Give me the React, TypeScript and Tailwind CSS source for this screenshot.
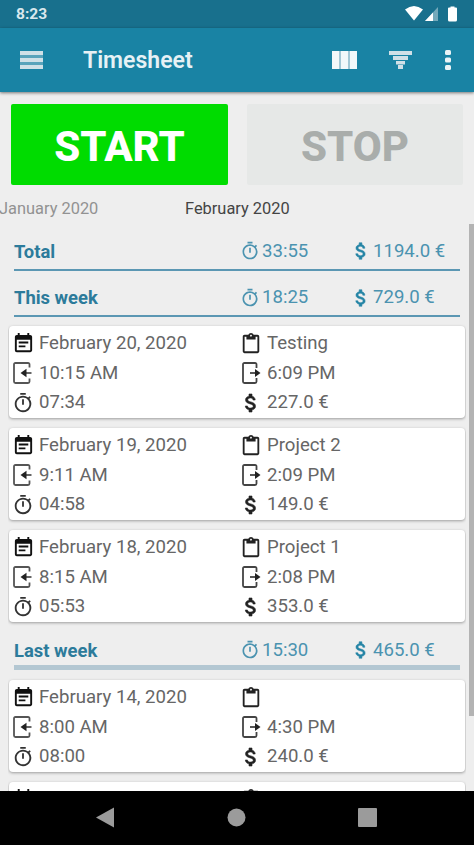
import React from 'react'
import { MdContentPaste, MdEventNote, MdOutlineTimer } from 'react-icons/md'

interface Entry {
  date: string
  project: string
  start: string
  end: string
  duration: string
  amount: string
}

interface SummaryProps {
  label: string
  time: string
  amount: string
  className?: string
}

const thisWeek: Entry[] = [
  { date: 'February 20, 2020', project: 'Testing', start: '10:15 AM', end: '6:09 PM', duration: '07:34', amount: '227.0 €' },
  { date: 'February 19, 2020', project: 'Project 2', start: '9:11 AM', end: '2:09 PM', duration: '04:58', amount: '149.0 €' },
  { date: 'February 18, 2020', project: 'Project 1', start: '8:15 AM', end: '2:08 PM', duration: '05:53', amount: '353.0 €' },
]

const lastWeek: Entry[] = [
  { date: 'February 14, 2020', project: '', start: '8:00 AM', end: '4:30 PM', duration: '08:00', amount: '240.0 €' },
  { date: '', project: '', start: '', end: '', duration: '', amount: '' },
]

function ClockInIcon() {
  return (
    <svg viewBox="0 0 20 22" className="ml-px h-[22px] w-5 shrink-0" fill="none" stroke="#555" strokeWidth="1.8">
      <path d="M16.500 5.500V2.500q0-1.500-1.500-1.500H2.500Q1 1 1 2.500v17q0 1.500 1.500 1.500h12.500q1.500 0 1.500-1.500v-3" />
      <path d="M18.500 11h-6" />
      <path d="M7.500 11l6-4.200v8.400z" fill="#222" stroke="none" />
    </svg>
  )
}

function ClockOutIcon() {
  return (
    <svg viewBox="0 0 20 22" className="ml-[2px] h-[22px] w-5 shrink-0" fill="none" stroke="#444" strokeWidth="1.8">
      <path d="M14.500 6V2.500q0-1.500-1.500-1.500H2.500Q1 1 1 2.500v17q0 1.500 1.500 1.500H13q1.500 0 1.500-1.500V16" />
      <path d="M8 11h6" />
      <path d="M18.500 11l-5.500-4v8z" fill="#222" stroke="none" />
    </svg>
  )
}

function DollarIcon({ className = '' }: { className?: string }) {
  return (
    <svg viewBox="0 0 24 24" className={`shrink-0 ${className}`} fill="currentColor" stroke="currentColor" strokeWidth="0.6">
      <path d="M11.8 10.900c-2.270-.590-3-1.200-3-2.150 0-1.090 1.010-1.850 2.700-1.850 1.780 0 2.440.850 2.500 2.100h2.210c-.070-1.720-1.120-3.300-3.210-3.810V3h-3v2.160c-1.940.420-3.500 1.680-3.500 3.610 0 2.310 1.910 3.460 4.700 4.130 2.500.600 3 1.480 3 2.410 0 .690-.490 1.790-2.700 1.790-2.060 0-2.870-.920-2.980-2.100h-2.200c.120 2.190 1.760 3.420 3.680 3.830V21h3v-2.150c1.950-.370 3.500-1.500 3.500-3.550 0-2.840-2.430-3.810-4.700-4.400z" />
    </svg>
  )
}

function Cell({ icon, text }: { icon: React.ReactNode; text: string }) {
  return (
    <div className="flex h-[29.5px] items-center">
      <span className="flex w-[27px] shrink-0 items-center">{icon}</span>
      <span className="pt-px whitespace-nowrap">{text}</span>
    </div>
  )
}

function EntryCard({ entry }: { entry: Entry }) {
  return (
    <div className="mb-[10px] flex h-[92px] shrink-0 rounded-[4px] bg-white pt-[3px] pl-[3px] text-[18.6px] text-[#666] shadow-[0_1px_3px_rgba(0,0,0,0.35)]">
      <div className="w-[228px]">
        <Cell icon={<MdEventNote className="size-[23px] text-[#111]" />} text={entry.date} />
        <Cell icon={<ClockInIcon />} text={entry.start} />
        <Cell icon={<MdOutlineTimer className="size-[22px] text-[#333]" />} text={entry.duration} />
      </div>
      <div>
        <Cell icon={<MdContentPaste className="size-[22px] text-[#222]" />} text={entry.project} />
        <Cell icon={<ClockOutIcon />} text={entry.end} />
        <Cell icon={<DollarIcon className="-ml-px size-[24px] text-[#222]" />} text={entry.amount} />
      </div>
    </div>
  )
}

function Summary({ label, time, amount, className = '' }: SummaryProps) {
  return (
    <div className={`mr-[5px] ml-[5px] flex shrink-0 items-center border-[#5b97b3] text-[18.6px] text-[#4b93b0] ${className}`}>
      <span className="w-[226px] text-[18.4px] font-bold text-[#2c7b9b]">{label}</span>
      <span className="flex w-[110px] items-center gap-[2px]">
        <MdOutlineTimer className="size-[20px]" />
        {time}
      </span>
      <span className="flex items-center gap-px whitespace-nowrap">
        <DollarIcon className="size-[22px] text-[#2484a5]" />
        {amount}
      </span>
    </div>
  )
}

function StatusBar() {
  return (
    <div className="flex h-[28px] shrink-0 items-center justify-between bg-[#18708d] pr-[16px] pl-[16px] text-white">
      <span className="pt-px text-[15.500px] font-bold text-[#d9e8ed]">8:23</span>
      <svg width="54" height="18" viewBox="0 0 54 18" fill="currentColor">
        <path d="M1 4.500Q10 -2.500 19 4.500L10 15.500z" />
        <path d="M21 16L34 2v14z" opacity="0.4" />
        <path d="M21 16l8-8.600V16z" />
        <path d="M44 3.500q0-1 1-1h1.500V1.500h4v1H52q1 0 1 1V15q0 1.500-1.500 1.500h-6Q44 16.500 44 15z" />
      </svg>
    </div>
  )
}

function Toolbar() {
  return (
    <header className="relative z-10 flex h-[64px] shrink-0 items-center bg-[#1983a4] text-[#d0e0e7] shadow-[0_1px_3px_rgba(0,0,0,0.5)]">
      <svg width="23" height="18" viewBox="0 0 23 18" className="ml-[20px]" fill="currentColor">
        <path d="M0 0h23v18H0z" opacity="0.35" />
        <path d="M0 0h23v4H0zM0 7h23v4H0zM0 14h23v4H0z" />
      </svg>
      <h1 className="ml-[40px] pt-[3px] text-[23px] font-semibold text-[#e6f1f5]">Timesheet</h1>
      <div className="ml-auto flex items-center">
        <svg width="25" height="18" viewBox="0 0 25 18">
          <path d="M0 0h25v18H0z" fill="#a3c7d5" />
          <path d="M0 0h7v18H0zM9 0h7v18H9zM18 0h7v18h-7z" fill="#f2f8fa" />
        </svg>
        <svg width="23" height="18" viewBox="0 0 23 18" className="ml-[32px]" fill="currentColor">
          <path d="M0 0h23v4H0zM4 5h15v4H4zM7 10h9v3.500H7zM9 14h5v4H9z" />
        </svg>
        <svg width="6" height="20" viewBox="0 0 6 20" className="mr-[23px] ml-[33px]" fill="#eaf3f6">
          <rect width="6" height="5" rx="1.500" />
          <rect y="7.500" width="6" height="5" rx="1.500" />
          <rect y="15" width="6" height="5" rx="1.500" />
        </svg>
      </div>
    </header>
  )
}

function NavBar() {
  return (
    <nav className="flex h-[54px] shrink-0 items-center bg-black">
      <svg width="474" height="54" viewBox="0 0 474 54" fill="#9b9b9b">
        <path d="M96 26.500L114 16.500v20z" />
        <circle cx="236.500" cy="26.500" r="9" />
        <rect x="358" y="17" width="19" height="19" rx="1" />
      </svg>
    </nav>
  )
}

export default function App() {
  return (
    <div className="flex h-[845px] w-[474px] flex-col overflow-hidden bg-[#eeeeee] font-['Roboto',sans-serif]">
      <StatusBar />
      <Toolbar />

      <div className="flex gap-[19px] px-[11px] pt-[12px] text-[42px] font-extrabold">
        <button type="button" className="h-[81px] w-[217px] rounded-[2px] bg-[#00dc00] pt-[4px] text-white">
          START
        </button>
        <button type="button" className="h-[81px] w-[216px] rounded-[2px] bg-[#e6e8e7] pt-[4px] text-[#a9adab]">
          STOP
        </button>
      </div>

      <div className="flex h-[40px] shrink-0 items-center pt-[9px] text-[16.4px]">
        <span className="-ml-px w-[186px] text-[#929292]">January 2020</span>
        <span className="text-[#444]">February 2020</span>
      </div>

      <div className="flex min-h-0 flex-1 justify-between">
        <main className="ml-[8px] flex w-[458px] flex-col overflow-hidden px-[1px]">
          <Summary label="Total" time="33:55" amount="1194.0 €" className="h-[46px] border-b-[2.500px] pt-[9px]" />
          <Summary label="This week" time="18:25" amount="729.0 €" className="mb-[9px] h-[46px] border-b-[2.500px] pt-[10px]" />
          {thisWeek.map((entry) => (
            <EntryCard key={entry.date} entry={entry} />
          ))}
          <Summary label="Last week" time="15:30" amount="465.0 €" className="mb-[10px] h-[38px] border-b-[5px] border-[#b3c7d2] pt-[4px]" />
          {lastWeek.map((entry) => (
            <EntryCard key={entry.date} entry={entry} />
          ))}
        </main>
        <div className="mt-[-1px] h-[492px] w-[5px] bg-[#b3b3b3]" />
      </div>

      <NavBar />
    </div>
  )
}
